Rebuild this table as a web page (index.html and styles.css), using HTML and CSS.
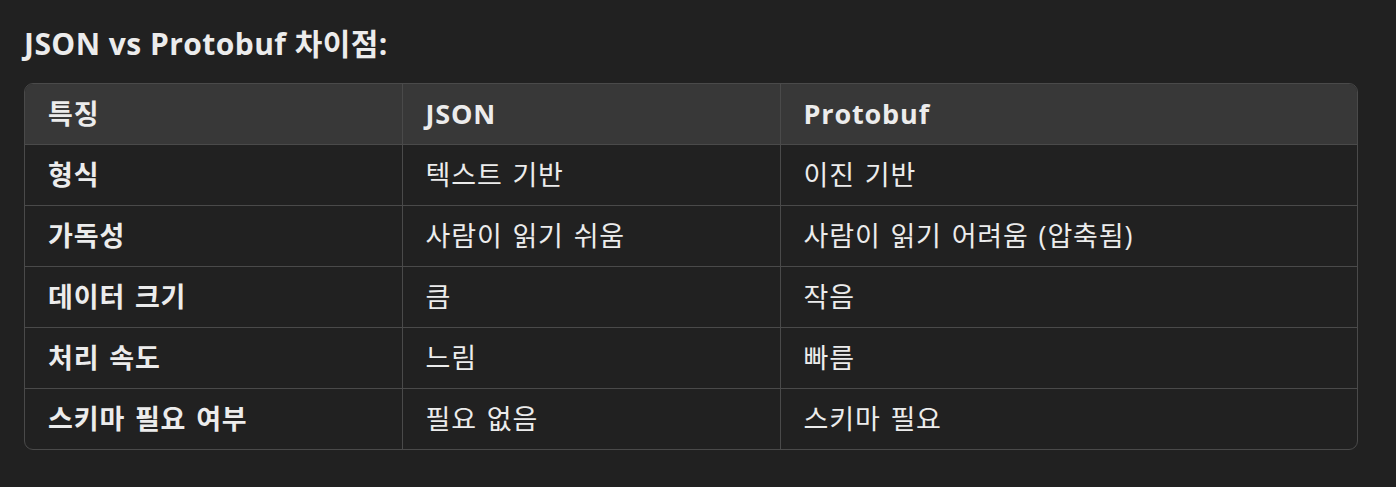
FILE: index.html
```html
<!DOCTYPE html>
<html lang="ko">
<head>
<meta charset="utf-8">
<link rel="stylesheet" href="styles.css">
</head>
<body>
<div class="page">
  <h3 class="title">JSON vs Protobuf 차이점:</h3>
  <div class="table-wrap">
    <table class="cmp">
      <colgroup><col class="c1"><col class="c2"><col class="c3"></colgroup>
      <thead>
        <tr><th>특징</th><th>JSON</th><th>Protobuf</th></tr>
      </thead>
      <tbody>
        <tr><td class="key">형식</td><td>텍스트 기반</td><td>이진 기반</td></tr>
        <tr><td class="key">가독성</td><td>사람이 읽기 쉬움</td><td>사람이 읽기 어려움 (압축됨)</td></tr>
        <tr><td class="key">데이터 크기</td><td>큼</td><td>작음</td></tr>
        <tr><td class="key">처리 속도</td><td>느림</td><td>빠름</td></tr>
        <tr><td class="key">스키마 필요 여부</td><td>필요 없음</td><td>스키마 필요</td></tr>
      </tbody>
    </table>
  </div>
</div>
</body>
</html>
```
FILE: styles.css
```css
html, body {
  margin: 0;
  padding: 0;
  background: #212121;
}
body {
  font-family: "Open Sans", "Noto Sans CJK KR", sans-serif;
  color: #ececec;
}
.page {
  padding: 24px 38px 0 24px;
}
.title {
  margin: 0;
  font-size: 30px;
  font-weight: 700;
  line-height: 40px;
  height: 40px;
  letter-spacing: 0.45px;
}
.table-wrap {
  margin-top: 19px;
  border: 1px solid #4a4a4a;
  border-radius: 9px;
  overflow: hidden;
}
.cmp {
  width: 100%;
  border-collapse: collapse;
  table-layout: fixed;
  font-size: 27px;
  letter-spacing: 0.85px;
  word-spacing: 2px;
}
.c1 { width: 377px; }
.c2 { width: 378px; }
.cmp th, .cmp td {
  text-align: left;
  padding: 0 23px;
  height: 60px;
  border-right: 1px solid #4a4a4a;
  border-bottom: 1px solid #4a4a4a;
  line-height: 36px;
}
.cmp th:last-child, .cmp td:last-child { border-right: none; }
.cmp tbody tr:last-child td { border-bottom: none; }
.cmp th {
  background: #383838;
  font-weight: 700;
  height: 60px;
}
.cmp td { font-weight: 400; }
.cmp td.key { font-weight: 700; }
```
